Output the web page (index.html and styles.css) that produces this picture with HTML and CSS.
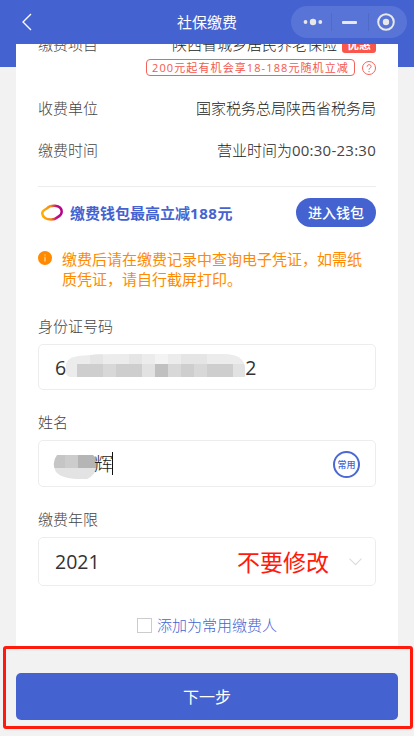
FILE: index.html
```html
<!DOCTYPE html>
<html lang="zh-CN">
<head>
<meta charset="utf-8">
<meta name="viewport" content="width=device-width, initial-scale=1">
<title>社保缴费</title>
<link rel="stylesheet" href="styles.css">
</head>
<body>
<header class="nav">
  <svg class="back" width="10" height="18" viewBox="0 0 10 18"><path d="M9 1 1 9l8 8"/></svg>
  <h1>社保缴费</h1>
  <div class="capsule">
    <svg width="116" height="32" viewBox="0 0 116 32">
      <g fill="#e8e8e8"><circle cx="14.5" cy="16" r="1.9"/><circle cx="22" cy="16" r="3.2"/><circle cx="29.3" cy="16" r="1.9"/><rect x="51" y="15" width="15" height="3" rx="1"/><circle cx="95" cy="16" r="3.2"/></g>
      <path d="M40.5 7v18M77.500 7v18" stroke="#4f6ac8"/>
      <circle cx="95" cy="16" r="7.800" fill="none" stroke="#e8e8e8" stroke-width="2"/>
    </svg>
  </div>
</header>
<main class="page">
  <section class="card">
    <div class="row project"><span class="key">缴费项目</span><span class="value">陕西省城乡居民养老保险<em class="tag">优惠</em></span></div>
    <div class="promo">
      <span class="promo-text">200元起有机会享18-188元随机立减</span>
      <svg width="14" height="14" viewBox="0 0 14 14"><circle cx="7" cy="7" r="6.500"/><path d="M5.100 5.700c0-2.700 4-2.600 4-.2C9.100 7 7 7 7 8.700M7 10v1.200"/></svg>
    </div>
    <div class="row unit"><span class="key">收费单位</span><span class="value">国家税务总局陕西省税务局</span></div>
    <div class="row time"><span class="key">缴费时间</span><span class="value">营业时间为<span class="num">00:30-23:30</span></span></div>
    <div class="wallet">
      <svg width="24" height="18" viewBox="0 0 24 18">
        <defs><linearGradient id="ring" x1="0" x2="1"><stop offset="0" stop-color="#ffb000"/><stop offset=".45" stop-color="#f48a16"/><stop offset=".72" stop-color="#c3127e"/><stop offset="1" stop-color="#b4008c"/></linearGradient></defs>
        <path fill="none" stroke="url(#ring)" stroke-width="2.500" stroke-linejoin="round" d="M2.200 9.500C2 6.500 5 5.700 6.800 4.500 9 2 12 1.600 15 1.800c4 .4 6.700 2.500 6.700 6 0 3.500-2.400 4-4.200 5.500-2 1.800-4 2.300-6.500 2.300-4.500 0-8.300-2.200-8.800-6.100Z"/>
      </svg>
      <strong>缴费钱包最高立减<span class="amount">188</span>元</strong>
      <button class="wallet-btn">进入钱包</button>
    </div>
    <div class="notice">
      <svg width="14" height="14" viewBox="0 0 14 14"><circle cx="7" cy="7" r="7" fill="#ff8a00"/><path d="M7 3.500v1M7 5.700v4.800" stroke="#ffd9ad" stroke-width="1.200"/></svg>
      <p>缴费后请在缴费记录中查询电子凭证，如需纸质凭证，请自行截屏打印。</p>
    </div>
    <label class="label">身份证号码</label>
    <div class="field id-field">
      <span class="num">6</span>
      <svg class="mask-id" width="180" height="27" viewBox="0 0 180 27">
        <clipPath id="idclip"><path d="M0 10Q1 4 12 2Q30 0 50 0H158Q178 0 179 14V23H4Q0 22 0 18Z"/></clipPath>
        <g clip-path="url(#idclip)" shape-rendering="crispEdges">
          <path fill="#ececec" d="M0 0h180v27H0z"/>
          <path fill="#e5e5e5" d="M24 0h13v10H24zM63 0h13v10H63zM115 0h26v10h-26z"/>
          <path fill="#f3f3f3" d="M89 0h13v10H89z"/>
          <path fill="#cecece" d="M11 10h26v13H11zM50 10h26v13H50zM115 10h13v13h-13zM141 10h26v13h-26z"/>
          <path fill="#d8d8d8" d="M37 10h13v13H37zM128 10h13v13h-13zM102 10h13v13h-13z"/>
          <path fill="#c0c0c0" d="M89 10h13v13H89z"/>
          <path fill="#e2e2e2" d="M76 10h13v13H76zM167 10h13v13h-13z"/>
        </g>
      </svg>
      <span class="num">2</span>
    </div>
    <label class="label name-label">姓名</label>
    <div class="field name-field">
      <svg class="mask-name" width="44" height="24" viewBox="0 0 44 24">
        <clipPath id="nameclip"><path d="M4 0H40Q44 3 44 10 43 20 34 24H23Q8 23 3 17-2 8 4 0Z"/></clipPath>
        <g clip-path="url(#nameclip)" shape-rendering="crispEdges"><path fill="#c5c5c5" d="M0 0h12v13H0z"/><path fill="#cccccc" d="M12 0h13v13H12z"/><path fill="#b5b5b5" d="M25 0h19v13H25z"/><path fill="#e3e3e3" d="M0 13h44v11H0z"/></g>
      </svg>
      <span class="name-char">辉</span><i class="caret"></i>
      <span class="frequent">常用</span>
    </div>
    <label class="label year-label">缴费年限</label>
    <div class="field year-field">
      <span class="num year">2021</span>
      <b class="warn">不要修改</b>
      <svg class="chevron" width="13" height="8" viewBox="0 0 13 8"><path d="m.5.700 6 6 6-6"/></svg>
    </div>
    <div class="add"><i class="box"></i><span>添加为常用缴费人</span></div>
  </section>
  <footer class="footer"><button class="next">下一步</button></footer>
</main>
<div class="highlight"></div>
</body>
</html>
```
FILE: styles.css
```css
* { box-sizing: border-box; }
body {
  margin: 0;
  width: 414px;
  height: 736px;
  overflow: hidden;
  position: relative;
  background: #f2f2f2;
  color: #222;
  font: 300 15px/20px "Open Sans", "Noto Sans CJK SC", sans-serif;
}
button { border: 0; padding: 0; font: inherit; }
.nav {
  height: 44px;
  padding: 0 7px 0 22px;
  display: grid;
  grid-template-columns: 1fr auto 1fr;
  align-items: center;
  background: #4463d1;
  color: #fff;
}
.nav h1 { margin: 0 0 0 -15px; font-size: 15px; font-weight: 400; line-height: 20px; }
.back { fill: none; stroke: #fff; stroke-width: 1.3; }
.capsule { justify-self: end; width: 116px; height: 32px; border-radius: 16px; background: #5774d6; }
.capsule svg { display: block; }
.page {
  height: 692px;
  padding: 0 16px;
  background: linear-gradient(#4463d1 23px, #f2f2f2 23px);
}
.card {
  height: 606px;
  padding: 0 22px;
  overflow: hidden;
  background: #fff;
  border-radius: 0 0 5px 5px;
}
.num { font-weight: 400; }
.row { display: flex; justify-content: space-between; height: 20px; }
.key, .label { color: #444; }
.time .num { color: #444; letter-spacing: .25px; }
.project { margin-top: -10px; }
.project .value { display: flex; align-items: center; }
.tag {
  width: 34px;
  height: 18px;
  margin-left: 5px;
  border-radius: 3px;
  background: #f9574c;
  color: #fff;
  font: 700 12px/18px "Noto Sans CJK SC", sans-serif;
  text-align: center;
}
.promo { display: flex; justify-content: flex-end; align-items: center; gap: 7px; height: 17px; margin-top: 5px; }
.promo-text {
  width: 209px;
  height: 17px;
  border: 1px solid #f4635a;
  border-radius: 4px;
  color: #f4574d;
  font-size: 11px;
  font-weight: 400;
  line-height: 15px;
  letter-spacing: 1.1px;
  text-align: center;
  white-space: nowrap;
}
.promo svg { fill: none; stroke: #f4635a; }
.unit { margin-top: 22px; }
.time { margin-top: 22px; }
.wallet {
  display: flex;
  align-items: center;
  height: 54px;
  margin-top: 26px;
  border-top: 1px solid #ececec;
}
.wallet svg { margin: -2px 0 0 2px; }
.wallet strong { margin: -2px 0 0 6px; color: #4463d1; font-size: 15px; font-weight: 700; }
.amount { letter-spacing: .6px; }
.wallet-btn {
  width: 80px;
  height: 29px;
  margin: -2px 0 0 auto;
  border-radius: 15px;
  background: #4463d1;
  color: #fff;
  font-size: 14px;
  font-weight: 500;
}
.notice { display: flex; gap: 10px; margin-top: 9px; color: #ff8a00; font-weight: 400; }
.notice svg { flex: none; margin-top: 2px; }
.notice p { width: 302px; margin: 0; }
.label { display: block; margin-top: 27px; height: 20px; }
.field {
  display: flex;
  align-items: center;
  height: 46px;
  margin-top: 8px;
  padding: 0 15px 0 16px;
  border: 1px solid #ededed;
  border-radius: 5px;
  font-size: 19.5px;
}
.field .num { color: #333; }
.id-field .num { margin-top: 2px; }
.mask-id { margin: 0 -1px 0 0; }
.name-label { margin-top: 22px; }
.name-field { height: 47px; padding-left: 14px; }
.mask-name { margin-top: 6px; }
.name-char { margin-left: -3px; font-size: 19px; }
.caret { width: 1px; height: 23px; margin-left: -1px; background: #111; }
.frequent {
  width: 27px;
  height: 27px;
  margin-left: auto;
  margin-top: 1px;
  border: 2px solid #4b68d3;
  border-radius: 50%;
  color: #4463d1;
  font-size: 9px;
  font-weight: 500;
  line-height: 23px;
  text-align: center;
}
.year-label { margin-top: 22px; }
.year-field { height: 49px; margin-top: 8px; padding-right: 13px; }
.year { margin-top: 1px; }
.warn { margin-left: auto; color: #ff1a0c; font-size: 23px; font-weight: 400; }
.chevron { margin-left: 20px; fill: none; stroke: #ddd; stroke-width: 1.2; }
.add { display: flex; justify-content: center; align-items: center; gap: 5px; margin-top: 29px; height: 20px; color: #4463d1; }
.box { width: 15px; height: 15px; border: 1px solid #ccc; }
.footer { padding-top: 23px; }
.next {
  display: block;
  width: 100%;
  height: 47px;
  border-radius: 5px;
  background: #4463d1;
  color: #fff;
  font-size: 16px;
  font-weight: 400;
}
.highlight {
  position: absolute;
  left: 3px;
  top: 646px;
  width: 410px;
  height: 83px;
  border: 3px solid #ff1a0c;
  border-radius: 3px;
}
```
